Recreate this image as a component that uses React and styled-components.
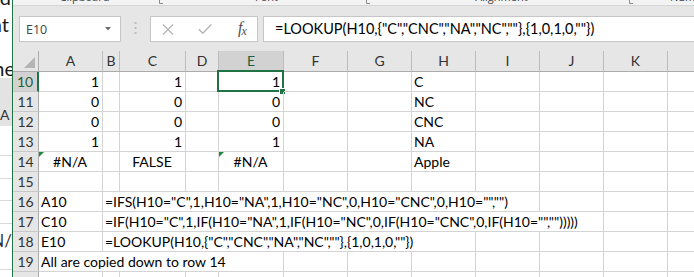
import React from 'react';
import styled, { createGlobalStyle, css } from 'styled-components';

const GREEN = '#217346';
const GRID = '#d4d4d4';
const AREA = '#e6e6e6';

const Global = createGlobalStyle`
  html, body { margin: 0; padding: 0; width: 694px; height: 277px; overflow: hidden; background: #fff; }
  #root { width: 694px; height: 277px; }
`;

const Screen = styled.div`
  display: flex;
  width: 694px;
  height: 277px;
  overflow: hidden;
`;

/* ---------- window behind (left strip) ---------- */
const BackWindow = styled.div`
  width: 12px;
  flex: none;
  display: flex;
  flex-direction: column;
  overflow: hidden;
  background: #fff;
  font-family: 'Lato', sans-serif;
  color: #1a1a1a;
`;
const DocLine = styled.div`
  height: ${p => p.$h}px;
  flex: none;
  display: flex;
  justify-content: flex-end;
  align-items: flex-end;
  overflow: hidden;
  white-space: nowrap;
  font-size: 20px;
  line-height: 20px;
  box-sizing: border-box;
`;
const DocWord = styled.span`
  margin-right: ${p => p.$mr || 0}px;
`;
const BackBand = styled.div`
  height: 48px;
  flex: none;
  background: #e3e3e3;
  display: flex;
  align-items: flex-end;
  padding-bottom: 4px;
  box-sizing: border-box;
  font-size: 14px;
  line-height: 14px;
  color: #333;
`;
const BackRow = styled.div`
  height: ${p => p.$h}px;
  flex: none;
  box-sizing: border-box;
  border-bottom: 1px solid #d9d9d9;
  display: flex;
  align-items: flex-end;
  justify-content: flex-end;
  overflow: hidden;
  white-space: nowrap;
  font-size: 17px;
  line-height: 17px;
  color: #333;
  padding-bottom: ${p => p.$pb || 0}px;
`;

/* ---------- excel ---------- */
const Excel = styled.div`
  flex: 1;
  min-width: 0;
  display: flex;
  flex-direction: column;
  border-left: 1px solid ${GREEN};
  overflow: hidden;
  background: #fff;
`;

const RibbonTail = styled.div`
  height: 6px;
  flex: none;
  box-sizing: border-box;
  background: #f3f3f3;
  border-bottom: 1px solid #d5d5d5;
  display: flex;
  overflow: hidden;
  font-family: 'Open Sans', sans-serif;
  font-size: 11px;
  color: #444;
`;
const RibbonGroup = styled.div`
  width: ${p => p.$w}px;
  flex: none;
  display: flex;
  align-items: flex-start;
`;
const GroupLabel = styled.div`
  flex: 1;
  text-align: ${p => p.$left ? 'left' : 'center'};
  padding-left: ${p => p.$pl || 0}px;
  line-height: 12px;
  margin-top: -9px;
  white-space: nowrap;
`;
const Launcher = styled.svg`
  width: 14px;
  flex: none;
  height: 5px;
`;

const FormulaArea = styled.div`
  height: 45px;
  flex: none;
  box-sizing: border-box;
  background: ${AREA};
  display: flex;
  align-items: flex-start;
  padding-top: 10px;
`;
const NameBox = styled.div`
  margin-left: 6px;
  width: 102px;
  height: 26px;
  flex: none;
  box-sizing: border-box;
  background: #fff;
  border: 1px solid #c6c6c6;
  display: flex;
  align-items: center;
  justify-content: space-between;
  padding: 0 9px 0 6px;
  font-family: 'Open Sans', sans-serif;
  font-size: 12.5px;
  color: #444;
`;
const Grip = styled.svg`
  margin: 6px 13px 0 13px;
  width: 3px;
  height: 14px;
  flex: none;
`;
const FxBox = styled.div`
  width: 108px;
  height: 26px;
  flex: none;
  box-sizing: border-box;
  background: #fff;
  border: 1px solid #c6c6c6;
  display: flex;
  align-items: center;
  padding-left: 7px;
  gap: 17px;
`;
const FxItem = styled.div`
  width: 20px;
  display: flex;
  justify-content: center;
  align-items: center;
`;
const FxText = styled.span`
  font-family: 'Liberation Serif', serif;
  font-style: italic;
  font-size: 16px;
  color: #505050;
  letter-spacing: -1px;
  & sub { font-size: 12px; vertical-align: -2px; }
`;
const FormulaInput = styled.div`
  margin-left: 5px;
  margin-right: -20px;
  flex: 1;
  height: 26px;
  box-sizing: border-box;
  background: #fff;
  border: 1px solid #c6c6c6;
  padding-left: 11px;
  font-family: 'Lato', sans-serif;
  font-size: 14.5px;
  line-height: 24px;
  white-space: nowrap;
  color: #000;
`;

const columns = [
  { key: 'A', w: 64 }, { key: 'B', w: 17 }, { key: 'C', w: 66 }, { key: 'D', w: 33 },
  { key: 'E', w: 65 }, { key: 'F', w: 64 }, { key: 'G', w: 64 }, { key: 'H', w: 64 },
  { key: 'I', w: 64 }, { key: 'J', w: 64 }, { key: 'K', w: 64 }, { key: 'L', w: 64 },
];

const Sheet = styled.div`
  display: grid;
  grid-template-columns: 26px ${columns.map(c => c.w + 'px').join(' ')};
  grid-template-rows: 21px;
  grid-auto-rows: 20px;
  font-family: 'Lato', sans-serif;
  font-size: 14px;
`;
const Corner = styled.div`
  box-sizing: border-box;
  background: ${AREA};
  border-right: 1px solid #ababab;
  border-bottom: 1px solid #ababab;
  display: flex;
  justify-content: flex-end;
  align-items: flex-end;
  padding: 0 3px 3px 0;
`;
const ColHead = styled.div`
  box-sizing: border-box;
  background: ${p => p.$sel ? '#d2d2d2' : AREA};
  border-right: 1px solid #bcbcbc;
  border-bottom: 1px solid #ababab;
  text-align: center;
  line-height: 20px;
  color: ${p => p.$sel ? '#1e5e3a' : '#333'};
`;
const RowHead = styled.div`
  box-sizing: border-box;
  background: ${p => p.$sel ? '#d2d2d2' : AREA};
  border-right: ${p => p.$sel ? `2px solid ${GREEN}` : '1px solid #ababab'};
  border-bottom: 1px solid #c8c8c8;
  text-align: center;
  line-height: 19px;
  color: ${p => p.$sel ? '#1e5e3a' : '#333'};
`;
const Cell = styled.div`
  position: relative;
  box-sizing: border-box;
  grid-column: span ${p => p.$span || 1};
  border-right: 1px solid ${GRID};
  border-bottom: 1px solid ${GRID};
  display: flex;
  align-items: flex-end;
  justify-content: ${p => p.$align === 'right' ? 'flex-end' : p.$align === 'center' ? 'center' : 'flex-start'};
  padding: 0 3px 0 2px;
  line-height: 19px;
  white-space: nowrap;
  color: #000;
  ${p => p.$err && css`
    &::before {
      content: '';
      position: absolute;
      left: 0;
      top: 0;
      border-top: 5px solid #1e8a3e;
      border-right: 5px solid transparent;
    }
  `}
`;
const Selection = styled.div`
  position: absolute;
  left: -2px;
  top: -2px;
  right: -1px;
  bottom: -1px;
  border: 2px solid ${GREEN};
  pointer-events: none;
`;
const FillHandle = styled.div`
  position: absolute;
  right: -2px;
  bottom: -3px;
  width: 5px;
  height: 5px;
  background: ${GREEN};
  box-shadow: 0 0 0 1px #fff;
`;

const rows = [
  { n: 10, cells: { A: { t: '1', a: 'right' }, C: { t: '1', a: 'right' }, E: { t: '1', a: 'right', sel: true }, H: { t: 'C' } } },
  { n: 11, cells: { A: { t: '0', a: 'right' }, C: { t: '0', a: 'right' }, E: { t: '0', a: 'right' }, H: { t: 'NC' } } },
  { n: 12, cells: { A: { t: '0', a: 'right' }, C: { t: '0', a: 'right' }, E: { t: '0', a: 'right' }, H: { t: 'CNC' } } },
  { n: 13, cells: { A: { t: '1', a: 'right' }, C: { t: '1', a: 'right' }, E: { t: '1', a: 'right' }, H: { t: 'NA' } } },
  { n: 14, cells: { A: { t: '#N/A', a: 'center', err: true }, C: { t: 'FALSE', a: 'center' }, E: { t: '#N/A', a: 'center', err: true }, H: { t: 'Apple' } } },
  { n: 15, cells: {} },
  { n: 16, cells: { A: { t: 'A10' }, B: { t: '=IFS(H10="C",1,H10="NA",1,H10="NC",0,H10="CNC",0,H10="","")', span: 8 } } },
  { n: 17, cells: { A: { t: 'C10' }, B: { t: '=IF(H10="C",1,IF(H10="NA",1,IF(H10="NC",0,IF(H10="CNC",0,IF(H10="","")))))', span: 9 } } },
  { n: 18, cells: { A: { t: 'E10' }, B: { t: '=LOOKUP(H10,{"C","CNC","NA","NC",""},{1,0,1,0,""})', span: 7 } } },
  { n: 19, cells: { A: { t: 'All are copied down to row 14', span: 5 } } },
  { n: 20, cells: {} },
];

function renderRow(row) {
  const out = [<RowHead key={`h${row.n}`} $sel={row.n === 10}>{row.n}</RowHead>];
  let i = 0;
  while (i < columns.length) {
    const key = columns[i].key;
    const c = row.cells[key];
    if (c) {
      const span = Math.min(c.span || 1, columns.length - i);
      out.push(
        <Cell key={key + row.n} $span={span} $align={c.a} $err={c.err}>
          {c.t}
          {c.sel && <Selection />}
          {c.sel && <FillHandle />}
        </Cell>
      );
      i += span;
    } else {
      out.push(<Cell key={key + row.n} />);
      i += 1;
    }
  }
  return out;
}

const ribbonGroups = [
  { w: 157, label: 'Clipboard' },
  { w: 207, label: 'Font' },
  { w: 263, label: 'Alignment' },
  { w: 60, label: 'Number', left: true, pl: 30 },
];

export default function App() {
  return (
    <>
      <Global />
      <Screen>
        <BackWindow>
          <DocLine $h={7}><DocWord $mr={1}>could</DocWord></DocLine>
          <DocLine $h={27}><DocWord $mr={3}>at</DocWord></DocLine>
          <DocLine $h={44}><DocWord $mr={-3}>one</DocWord></DocLine>
          <BackBand>A</BackBand>
          <BackRow $h={30} />
          <BackRow $h={23} />
          <BackRow $h={22} />
          <BackRow $h={23} />
          <BackRow $h={46} $pb={20}>#N/</BackRow>
          <BackRow $h={8} />
        </BackWindow>
        <Excel>
          <RibbonTail>
            {ribbonGroups.map(g => (
              <RibbonGroup key={g.label} $w={g.w}>
                <GroupLabel $left={g.left} $pl={g.pl}>{g.label}</GroupLabel>
                {!g.left && (
                  <Launcher viewBox="0 0 14 5">
                    <path d="M3.5 0v3.5H7" fill="none" stroke="#8a8a8a" strokeWidth="1" />
                  </Launcher>
                )}
              </RibbonGroup>
            ))}
          </RibbonTail>
          <FormulaArea>
            <NameBox>
              <span>E10</span>
              <svg width="6" height="4" viewBox="0 0 6 4"><path d="M0 0h6L3 3.5z" fill="#6d6d6d" /></svg>
            </NameBox>
            <Grip viewBox="0 0 3 14">
              <rect x="0.5" y="0" width="2" height="2" fill="#bdbdbd" />
              <rect x="0.5" y="5" width="2" height="2" fill="#bdbdbd" />
              <rect x="0.5" y="10" width="2" height="2" fill="#bdbdbd" />
            </Grip>
            <FxBox>
              <FxItem>
                <svg width="12" height="11" viewBox="0 0 12 11"><path d="M1 0.5l10 10M11 0.5l-10 10" stroke="#b4b4b4" strokeWidth="1.3" fill="none" /></svg>
              </FxItem>
              <FxItem>
                <svg width="14" height="10" viewBox="0 0 14 10"><path d="M0.8 5.2l4 4 8.5-8.6" stroke="#b4b4b4" strokeWidth="1.4" fill="none" /></svg>
              </FxItem>
              <FxItem>
                <FxText>f<sub>x</sub></FxText>
              </FxItem>
            </FxBox>
            <FormulaInput>{'=LOOKUP(H10,{"C","CNC","NA","NC",""},{1,0,1,0,""})'}</FormulaInput>
          </FormulaArea>
          <Sheet>
            <Corner>
              <svg width="11" height="11" viewBox="0 0 11 11"><path d="M11 0v11H0z" fill="#b4b4b4" /></svg>
            </Corner>
            {columns.map(c => (
              <ColHead key={c.key} $sel={c.key === 'E'}>{c.key}</ColHead>
            ))}
            {rows.map(renderRow)}
          </Sheet>
        </Excel>
      </Screen>
    </>
  );
}
